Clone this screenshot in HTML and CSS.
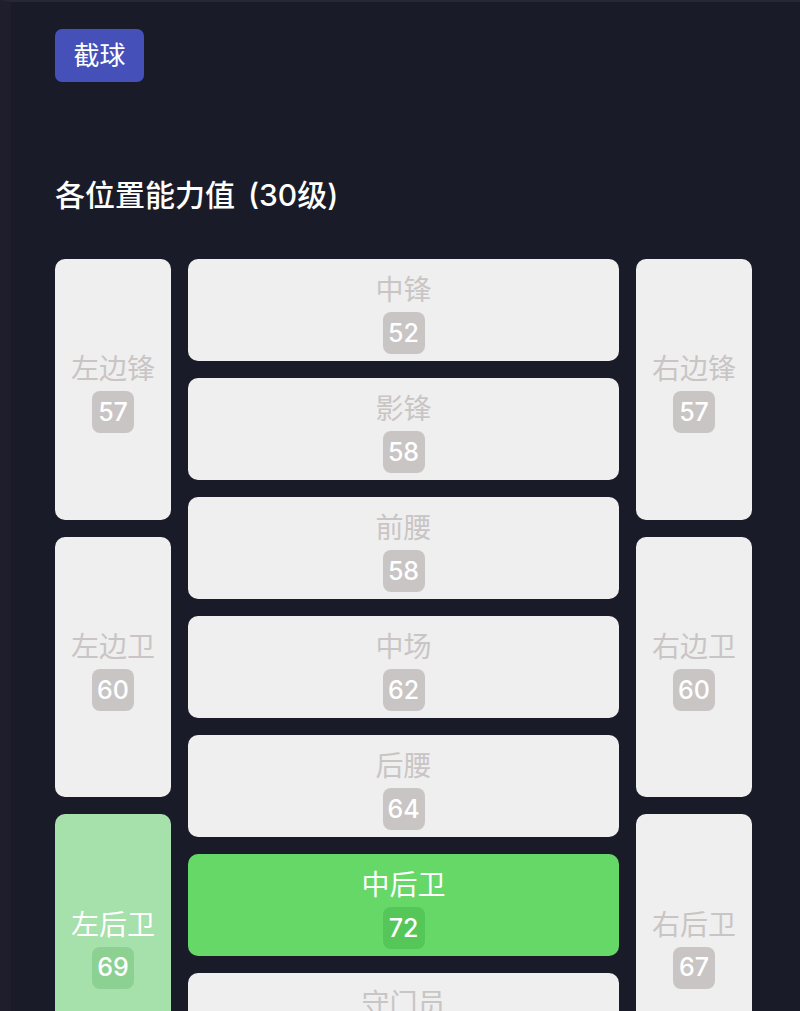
FILE: index.html
```html
<!DOCTYPE html>
<html lang="zh-CN">
<head>
<meta charset="utf-8">
<title>各位置能力值</title>
<link rel="stylesheet" href="styles.css">
</head>
<body>
<div class="page">
  <div class="tag">截球</div>
  <h1 class="title">各位置能力值 (30级)</h1>
  <div class="grid">
    <div class="side">
      <div class="card"><div class="label">左边锋</div><div class="badge">57</div></div>
      <div class="card"><div class="label">左边卫</div><div class="badge">60</div></div>
      <div class="card light"><div class="label">左后卫</div><div class="badge">69</div></div>
    </div>
    <div class="mid">
      <div class="card"><div class="label">中锋</div><div class="badge">52</div></div>
      <div class="card"><div class="label">影锋</div><div class="badge">58</div></div>
      <div class="card"><div class="label">前腰</div><div class="badge">58</div></div>
      <div class="card"><div class="label">中场</div><div class="badge">62</div></div>
      <div class="card"><div class="label">后腰</div><div class="badge">64</div></div>
      <div class="card green"><div class="label">中后卫</div><div class="badge">72</div></div>
      <div class="card"><div class="label">守门员</div><div class="badge">50</div></div>
    </div>
    <div class="side">
      <div class="card"><div class="label">右边锋</div><div class="badge">57</div></div>
      <div class="card"><div class="label">右边卫</div><div class="badge">60</div></div>
      <div class="card"><div class="label">右后卫</div><div class="badge">67</div></div>
    </div>
  </div>
</div>
</body>
</html>
```

FILE: styles.css
```css
html, body {
  margin: 0;
  padding: 0;
  background: #1a1b28;
}
body {
  font-family: Inter, "Noto Sans CJK SC", sans-serif;
  color: #fff;
}
.page {
  border-top: 2px solid #272834;
  border-left: 11px solid #1e1e2c;
  padding: 27px 48px 40px 44px;
}
.tag {
  display: flex;
  align-items: center;
  justify-content: center;
  width: 89px;
  height: 53px;
  border-radius: 7px;
  background: #4551b9;
  color: #fff;
  font-size: 26px;
  line-height: 1;
}
.title {
  margin: 93px 0 0;
  font-size: 30px;
  line-height: 40px;
  font-weight: 500;
  color: #fff;
  word-spacing: 5px;
}
.grid {
  margin-top: 44px;
  display: grid;
  grid-template-columns: 116px 1fr 116px;
  gap: 17px;
  height: 816px;
}
.side, .mid {
  display: flex;
  flex-direction: column;
  gap: 17px;
}
.side .card, .mid .card {
  flex: 1 1 0;
}
.card {
  background: #efefef;
  border-radius: 10px;
  display: flex;
  flex-direction: column;
  align-items: center;
  justify-content: center;
  padding-top: 6px;
  box-sizing: border-box;
}
.label {
  font-size: 28px;
  line-height: 36px;
  color: #c9c5c5;
  white-space: nowrap;
}
.badge {
  margin-top: 4px;
  width: 42px;
  height: 42px;
  border-radius: 8px;
  background: #c9c5c5;
  color: #fff;
  font-size: 25px;
  font-weight: 500;
  display: flex;
  align-items: center;
  justify-content: center;
  line-height: 1;
}
.card.green {
  background: #66d868;
}
.card.green .label {
  color: #fff;
}
.card.green .badge {
  background: #55c658;
}
.card.light {
  background: #a6e0ab;
}
.card.light .label {
  color: #fff;
}
.card.light .badge {
  background: #8dd192;
}
```
